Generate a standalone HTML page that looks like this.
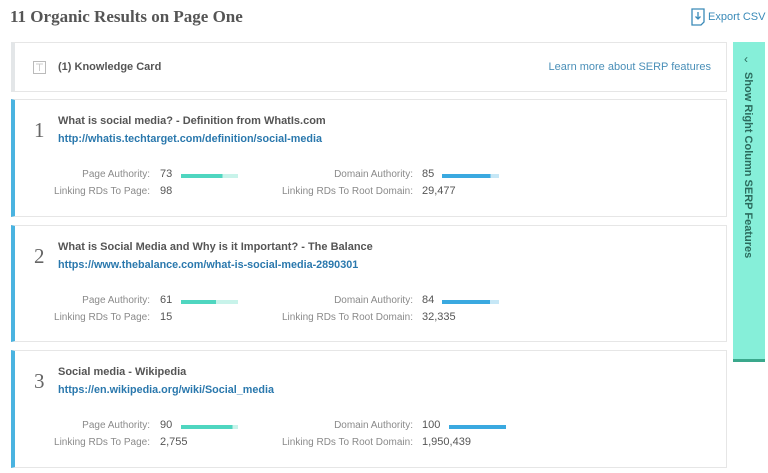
<!DOCTYPE html>
<html><head><style>
*{margin:0;padding:0;box-sizing:border-box}
body{width:768px;height:473px;background:#fff;font-family:"Liberation Sans",sans-serif;position:relative;overflow:hidden;color:#444}
.h{position:absolute;left:10px;top:7px;font-family:"Liberation Serif",serif;font-size:17px;font-weight:bold;color:#555}
.exp{position:absolute;left:691px;top:9px;font-size:11px;color:#3a8ab8}
.exp svg{position:absolute;left:0;top:-1px}
.exp span{position:absolute;left:17px;top:2px;white-space:nowrap}
.card{position:absolute;left:11px;width:716px;border:1px solid #e6e6e6;border-left:4px solid #4ab3e0;background:#fff}
.kc{top:42px;height:50px;border-left-color:#e3e6e8}
.kc .t{position:absolute;left:43px;top:18px;font-size:11px;font-weight:bold;color:#555}
.kc .l{position:absolute;right:15px;top:18px;font-size:11px;color:#4a8fb8}
.n{position:absolute;left:19px;top:18px;font-family:"Liberation Serif",serif;font-size:21px;color:#666}
.ti{position:absolute;left:43px;top:15px;font-size:11px;font-weight:bold;color:#555}
.u{position:absolute;left:43px;top:33px;font-size:10.8px;color:#2a78ad;font-weight:bold}
.lb{position:absolute;font-size:10px;color:#8a8a8a;text-align:right;width:200px}
.v{position:absolute;font-size:11px;color:#555}
.bar{position:absolute;height:4px;width:57px}
.side{position:absolute;left:733px;top:42px;width:32px;height:320px;background:#86efd9;border-bottom:3px solid #3aa88c}
.side .tx{position:absolute;left:9px;top:30px;writing-mode:vertical-rl;font-size:11px;font-weight:bold;color:#2b6b5d;white-space:nowrap}
.side .ch{position:absolute;left:11px;top:10px;font-size:12px;color:#2b6b5d}
</style></head><body>
<div class="h">11 Organic Results on Page One</div>
<div class="exp"><svg width="14" height="18" viewBox="0 0 14 18"><path d="M1 1h12v13l-3 3H1z" fill="none" stroke="#3a8ab8" stroke-width="1.3"/><path d="M7 4v7M4.5 8.5L7 11l2.5-2.5" fill="none" stroke="#3a8ab8" stroke-width="1.3"/></svg><span>Export CSV</span></div>

<div class="card kc"><svg style="position:absolute;left:18px;top:18px" width="13" height="13" viewBox="0 0 13 13"><rect x="0.5" y="0.5" width="12" height="12" fill="none" stroke="#bbb"/><path d="M3 3h7M6.5 3v7" stroke="#ccc"/></svg><div class="t">(1) Knowledge Card</div><div class="l">Learn more about SERP features</div></div>

<div class="card" style="top:99px;height:118px">
<div class="n">1</div><div class="ti">What is social media? - Definition from WhatIs.com</div><div class="u">http://whatis.techtarget.com/definition/social-media</div>
<div class="lb" style="left:-65px;top:69px">Page Authority:</div><div class="v" style="left:145px;top:68px">73</div>
<div class="bar" style="left:166px;top:74px;background:linear-gradient(90deg,#4fd6c0 73%,#c8f3ea 73%)"></div>
<div class="lb" style="left:-65px;top:86px">Linking RDs To Page:</div><div class="v" style="left:145px;top:85px">98</div>
<div class="lb" style="left:198px;top:69px">Domain Authority:</div><div class="v" style="left:407px;top:68px">85</div>
<div class="bar" style="left:427px;top:74px;background:linear-gradient(90deg,#3aa9e0 85%,#c6e7f6 85%)"></div>
<div class="lb" style="left:198px;top:86px">Linking RDs To Root Domain:</div><div class="v" style="left:407px;top:85px">29,477</div>
</div>

<div class="card" style="top:225px;height:117px">
<div class="n">2</div><div class="ti">What is Social Media and Why is it Important? - The Balance</div><div class="u">https://www.thebalance.com/what-is-social-media-2890301</div>
<div class="lb" style="left:-65px;top:69px">Page Authority:</div><div class="v" style="left:145px;top:68px">61</div>
<div class="bar" style="left:166px;top:74px;background:linear-gradient(90deg,#4fd6c0 61%,#c8f3ea 61%)"></div>
<div class="lb" style="left:-65px;top:86px">Linking RDs To Page:</div><div class="v" style="left:145px;top:85px">15</div>
<div class="lb" style="left:198px;top:69px">Domain Authority:</div><div class="v" style="left:407px;top:68px">84</div>
<div class="bar" style="left:427px;top:74px;background:linear-gradient(90deg,#3aa9e0 84%,#c6e7f6 84%)"></div>
<div class="lb" style="left:198px;top:86px">Linking RDs To Root Domain:</div><div class="v" style="left:407px;top:85px">32,335</div>
</div>

<div class="card" style="top:350px;height:118px">
<div class="n">3</div><div class="ti">Social media - Wikipedia</div><div class="u">https://en.wikipedia.org/wiki/Social_media</div>
<div class="lb" style="left:-65px;top:69px">Page Authority:</div><div class="v" style="left:145px;top:68px">90</div>
<div class="bar" style="left:166px;top:74px;background:linear-gradient(90deg,#4fd6c0 90%,#c8f3ea 90%)"></div>
<div class="lb" style="left:-65px;top:86px">Linking RDs To Page:</div><div class="v" style="left:145px;top:85px">2,755</div>
<div class="lb" style="left:198px;top:69px">Domain Authority:</div><div class="v" style="left:407px;top:68px">100</div>
<div class="bar" style="left:434px;top:74px;background:#3aa9e0"></div>
<div class="lb" style="left:198px;top:86px">Linking RDs To Root Domain:</div><div class="v" style="left:407px;top:85px">1,950,439</div>
</div>

<div class="side"><div class="ch">&lsaquo;</div><div class="tx">Show Right Column SERP Features</div></div>
</body></html>
